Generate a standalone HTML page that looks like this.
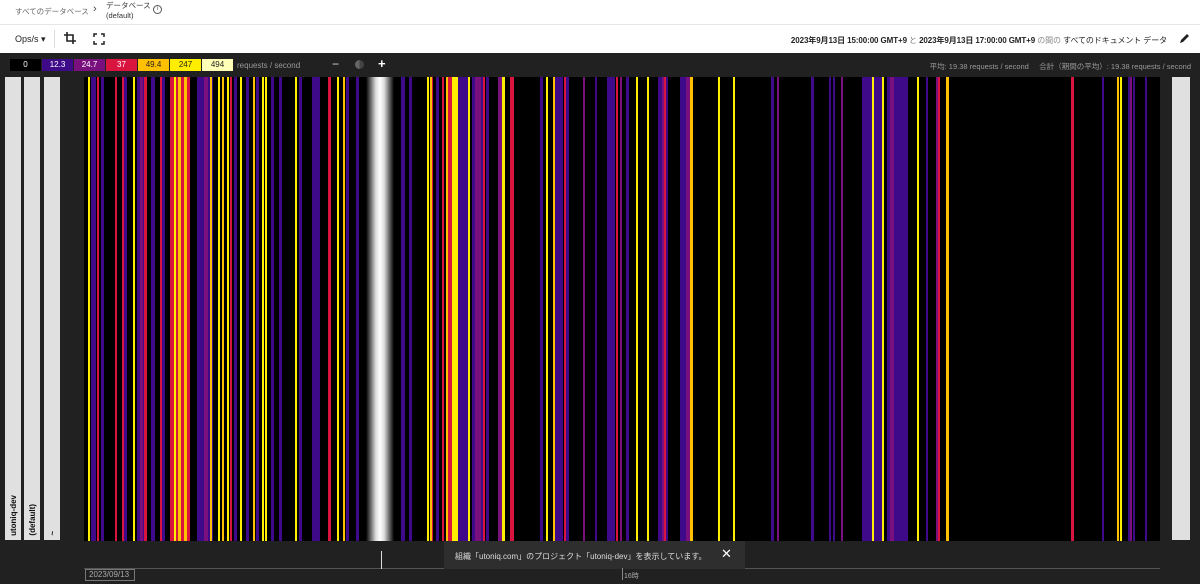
<!DOCTYPE html><html><head><meta charset="utf-8"><style>
*{margin:0;padding:0;box-sizing:border-box}
body{width:1200px;height:584px;overflow:hidden;background:#fff;font-family:"Liberation Sans","Noto Sans CJK JP",sans-serif;position:relative}
.a{position:absolute}
.lg{position:absolute;top:59px;height:12px;font-size:8px;text-align:center;line-height:12px}
.lab{position:absolute;top:77px;height:463px;background:#e0e0e0;width:16px;display:flex;align-items:flex-end;justify-content:center;padding-bottom:4px}
.lab span{writing-mode:vertical-rl;transform:rotate(180deg);white-space:nowrap;font-size:8px;font-weight:bold;color:#111}
</style></head><body>
<div class="a" style="left:15px;top:6px;font-size:7.5px;color:#666;white-space:nowrap">すべてのデータベース</div>
<div class="a" style="left:93px;top:3px;font-size:11px;color:#444">›</div>
<div class="a" style="left:106px;top:1px;font-size:7.5px;color:#333;line-height:10px">データベース<br>(default)</div>
<div class="a" style="left:153px;top:5px;width:9px;height:9px;border:1px solid #555;border-radius:50%;font-size:6px;text-align:center;line-height:7px;color:#555">i</div>
<div class="a" style="left:0;top:24px;width:1200px;height:1px;background:#e6e6e6"></div>
<div class="a" style="left:15px;top:34px;font-size:9px;color:#222">Ops/s ▾</div>
<div class="a" style="left:54px;top:30px;width:1px;height:18px;background:#ddd"></div>
<svg class="a" style="left:63px;top:31px" width="14" height="14" viewBox="0 0 14 14"><path d="M4 1v9h9M1 4h9v9" stroke="#222" stroke-width="1.6" fill="none"/></svg>
<svg class="a" style="left:93px;top:33px" width="12" height="12" viewBox="0 0 12 12"><path d="M1 4V1h3M8 1h3v3M11 8v3H8M4 11H1V8" stroke="#222" stroke-width="1.5" fill="none"/></svg>
<div class="a" style="right:33px;top:35px;font-size:8px;color:#222;font-weight:bold;white-space:nowrap;letter-spacing:-0.1px">2023年9月13日 15:00:00 GMT+9 <span style="font-weight:normal;color:#777">と</span> 2023年9月13日 17:00:00 GMT+9 <span style="font-weight:normal;color:#888">の間の</span> <span style="font-weight:normal">すべてのドキュメント データ</span></div>
<svg class="a" style="left:1179px;top:33px" width="11" height="11" viewBox="0 0 11 11"><path d="M1 10l1-3 6-6 2 2-6 6z" fill="#222"/></svg>
<div class="a" style="left:0;top:53px;width:1200px;height:531px;background:#212121"></div>
<div class="lg" style="left:10px;width:31px;background:#000;color:#fff">0</div>
<div class="lg" style="left:42px;width:31px;background:#3f0a8a;color:#fff">12.3</div>
<div class="lg" style="left:74px;width:31px;background:#7a0f7e;color:#fff">24.7</div>
<div class="lg" style="left:106px;width:31px;background:#d8143f;color:#fff">37</div>
<div class="lg" style="left:138px;width:31px;background:#ffc000;color:#222">49.4</div>
<div class="lg" style="left:170px;width:31px;background:#ffee00;color:#222">247</div>
<div class="lg" style="left:202px;width:31px;background:#ffffb8;color:#222">494</div>
<div class="a" style="left:237px;top:61px;font-size:8px;color:#999">requests / second</div>
<div class="a" style="left:332px;top:57px;font-size:12px;color:#ddd">−</div>
<div class="a" style="left:355px;top:60px;width:9px;height:9px;border-radius:50%;background:linear-gradient(90deg,#666 50%,#444 50%)"></div>
<div class="a" style="left:378px;top:56px;font-size:13px;color:#fff;font-weight:bold">+</div>
<div class="a" style="right:9px;top:61px;font-size:7.5px;color:#999;white-space:nowrap">平均: 19.38 requests / second &nbsp; &nbsp; 合計（期間の平均）: 19.38 requests / second</div>
<div class="lab" style="left:5px"><span>utoniq-dev</span></div>
<div class="lab" style="left:24px"><span>(default)</span></div>
<div class="lab" style="left:44px"><span>~</span></div>
<div class="a" style="left:1172px;top:77px;width:18px;height:463px;background:#e0e0e0"></div>
<svg class="a" style="left:0;top:0" width="1200" height="584">
<defs><linearGradient id="g" x1="0" x2="1"><stop offset="0" stop-color="#000"/><stop offset="0.35" stop-color="#ddd"/><stop offset="0.5" stop-color="#fff"/><stop offset="0.65" stop-color="#ddd"/><stop offset="1" stop-color="#000"/></linearGradient></defs>
<rect x="84" y="77" width="1076" height="464" fill="#000"/>
<g transform="translate(0,77)">
<g fill="#3f0a8a">
<rect x="91" width="5" height="464"/><rect x="101" width="3" height="464"/><rect x="124" width="3" height="464"/><rect x="137" width="10" height="464"/><rect x="151" width="4" height="464"/><rect x="162" width="3" height="464"/><rect x="197" width="16" height="464"/><rect x="234" width="3" height="464"/><rect x="246" width="3" height="464"/><rect x="256" width="3" height="464"/><rect x="271" width="3" height="464"/><rect x="279" width="3" height="464"/><rect x="299" width="3" height="464"/><rect x="312" width="8" height="464"/><rect x="346" width="3" height="464"/><rect x="356" width="3" height="464"/><rect x="401" width="4" height="464"/><rect x="409" width="3" height="464"/><rect x="436" width="3" height="464"/><rect x="458" width="10" height="464"/><rect x="472" width="11" height="464"/><rect x="486" width="3" height="464"/><rect x="540" width="3" height="464"/><rect x="555" width="8" height="464"/><rect x="566" width="3" height="464"/><rect x="595" width="2" height="464"/><rect x="607" width="8" height="464"/><rect x="626" width="3" height="464"/><rect x="658" width="10" height="464"/><rect x="680" width="13" height="464"/><rect x="771" width="3" height="464"/><rect x="811" width="3" height="464"/><rect x="829" width="2" height="464"/><rect x="833" width="2" height="464"/><rect x="862" width="20" height="464"/><rect x="887" width="21" height="464"/><rect x="926" width="2" height="464"/><rect x="1102" width="2" height="464"/><rect x="1128" width="2" height="464"/><rect x="1133" width="2" height="464"/><rect x="1145" width="2" height="464"/>
</g>
<g fill="#7a0f7e">
<rect x="140" width="3" height="464"/><rect x="204" width="4" height="464"/><rect x="475" width="6" height="464"/><rect x="498" width="4" height="464"/><rect x="583" width="2" height="464"/><rect x="620" width="2" height="464"/><rect x="662" width="4" height="464"/><rect x="686" width="4" height="464"/><rect x="777" width="2" height="464"/><rect x="841" width="2" height="464"/><rect x="890" width="4" height="464"/><rect x="936" width="3" height="464"/><rect x="1130" width="2" height="464"/>
</g>
<g fill="#d8143f">
<rect x="97" width="2" height="464"/><rect x="115" width="2" height="464"/><rect x="122" width="2" height="464"/><rect x="144" width="3" height="464"/><rect x="160" width="2" height="464"/><rect x="170" width="20" height="464"/><rect x="230" width="2" height="464"/><rect x="328" width="3" height="464"/><rect x="431" width="2" height="464"/><rect x="442" width="2" height="464"/><rect x="448" width="4" height="464"/><rect x="483" width="2" height="464"/><rect x="510" width="4" height="464"/><rect x="564" width="2" height="464"/><rect x="616" width="2" height="464"/><rect x="664" width="2" height="464"/><rect x="938" width="2" height="464"/><rect x="1071" width="3" height="464"/>
</g>
<g fill="#ffc000">
<rect x="178" width="3" height="464"/><rect x="184" width="3" height="464"/><rect x="210" width="2" height="464"/><rect x="222" width="2" height="464"/><rect x="253" width="2" height="464"/><rect x="343" width="2" height="464"/><rect x="430" width="2" height="464"/><rect x="446" width="2" height="464"/><rect x="553" width="2" height="464"/><rect x="690" width="3" height="464"/><rect x="946" width="3" height="464"/><rect x="1117" width="2" height="464"/>
</g>
<g fill="#ffee00">
<rect x="88" width="2" height="464"/><rect x="133" width="2" height="464"/><rect x="174" width="2" height="464"/><rect x="218" width="2" height="464"/><rect x="227" width="2" height="464"/><rect x="240" width="2" height="464"/><rect x="262" width="2" height="464"/><rect x="265" width="2" height="464"/><rect x="295" width="2" height="464"/><rect x="337" width="2" height="464"/><rect x="427" width="2" height="464"/><rect x="452" width="6" height="464"/><rect x="468" width="2" height="464"/><rect x="502" width="3" height="464"/><rect x="546" width="2" height="464"/><rect x="636" width="2" height="464"/><rect x="647" width="2" height="464"/><rect x="718" width="2" height="464"/><rect x="733" width="2" height="464"/><rect x="872" width="2" height="464"/><rect x="882" width="2" height="464"/><rect x="917" width="2" height="464"/><rect x="1120" width="2" height="464"/>
</g>
<rect x="366" width="28" height="464" fill="url(#g)"/>
</g>
</svg>
<div class="a" style="left:84px;top:568px;width:1076px;height:1px;background:#555"></div>
<div class="a" style="left:381px;top:551px;width:1px;height:18px;background:#ddd"></div>
<div class="a" style="left:444px;top:541px;width:301px;height:28px;background:#2e2e2e"></div>
<div class="a" style="left:455px;top:551px;font-size:8px;color:#ddd;white-space:nowrap">組織「utoniq.com」のプロジェクト「utoniq-dev」を表示しています。</div>
<div class="a" style="left:721px;top:546px;font-size:13px;color:#fff">✕</div>
<div class="a" style="left:85px;top:569px;width:50px;height:12px;border:1px solid #777;font-size:8px;color:#aaa;line-height:10px;padding-left:3px">2023/09/13</div>
<div class="a" style="left:622px;top:568px;width:1px;height:12px;background:#888"></div>
<div class="a" style="left:624px;top:571px;font-size:7px;color:#aaa">16時</div>
</body></html>
